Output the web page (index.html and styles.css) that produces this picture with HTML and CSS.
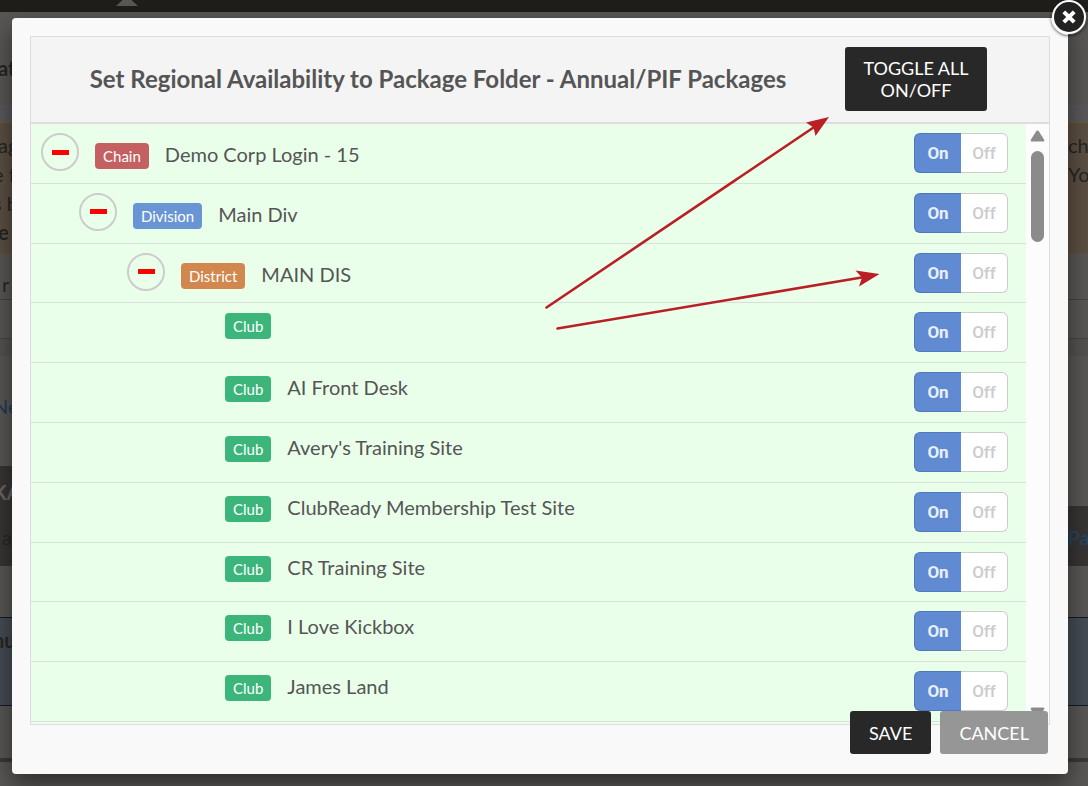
FILE: index.html
```html
<!DOCTYPE html>
<html lang="en">

<head>
    <meta charset="UTF-8">
    <meta name="viewport" content="width=device-width, initial-scale=1.0">
    <title>Regional Availability</title>
    <link rel="stylesheet" href="styles.css">
</head>

<body>
    <!-- dimmed page behind the dialog -->
    <div class="page" aria-hidden="true">
        <div class="topbar"><span class="caret"></span></div>
        <div class="band heading"><b class="bleed">at</b></div>
        <div class="band spacer"></div>
        <div class="band notice">
            <p><span class="bleed">ag</span><span class="side">ch</span></p>
            <p><span class="bleed-more">e f</span><span class="side">You</span></p>
            <p><span class="bleed-more">s b</span></p>
            <p><b class="bleed">e</b></p>
        </div>
        <div class="band filter">r</div>
        <div class="band divider"></div>
        <div class="band gap"></div>
        <div class="band links"><span class="link bleed-more">Ne</span></div>
        <div class="band tabs">
            <p class="tab-title"><b class="bleed-more">KA</b><span class="tab-side"></span></p>
            <p class="tab-row"><span>a</span><span class="side link">Pa</span></p>
        </div>
        <div class="band plain"></div>
        <div class="band folder"><b class="bleed-more">nu</b></div>
        <div class="band rest"></div>
        <div class="band foot"></div>
    </div>

    <div class="modal" role="dialog" aria-labelledby="title">
        <button class="close" type="button" aria-label="Close">
            <svg viewBox="0 0 36 36" width="36" height="36">
                <circle cx="18" cy="18" r="16" fill="#222" stroke="#fff" stroke-width="2" />
                <path d="M12.800 12.800l10.400 10.400M23.200 12.800l-10.400 10.400" stroke="#fff" stroke-width="4" />
            </svg>
        </button>

        <div class="panel">
            <div class="panel-head">
                <h1 id="title">Set Regional Availability to Package Folder - Annual/PIF Packages</h1>
                <div class="head-action">
                    <button class="btn btn-toggle" type="button">TOGGLE ALL<br>ON/OFF</button>
                </div>
            </div>

            <div class="panel-body">
                <div class="rows">
                    <div class="row parent">
                        <button class="collapse" type="button" aria-label="Collapse"></button>
                        <div class="node"><span class="tag chain">Chain</span><span class="name">Demo Corp Login - 15</span></div>
                        <label class="switch"><input type="checkbox" checked aria-label="Demo Corp Login - 15"><span class="on">On</span><span class="off">Off</span></label>
                    </div>
                    <div class="row parent level-1">
                        <button class="collapse" type="button" aria-label="Collapse"></button>
                        <div class="node"><span class="tag division">Division</span><span class="name">Main Div</span></div>
                        <label class="switch"><input type="checkbox" checked aria-label="Main Div"><span class="on">On</span><span class="off">Off</span></label>
                    </div>
                    <div class="row parent level-2">
                        <button class="collapse" type="button" aria-label="Collapse"></button>
                        <div class="node"><span class="tag district">District</span><span class="name">MAIN DIS</span></div>
                        <label class="switch"><input type="checkbox" checked aria-label="MAIN DIS"><span class="on">On</span><span class="off">Off</span></label>
                    </div>
                    <div class="row level-3">
                        <div class="node"><span class="tag club">Club</span></div>
                        <label class="switch"><input type="checkbox" checked aria-label="Club"><span class="on">On</span><span class="off">Off</span></label>
                    </div>
                    <div class="row level-3">
                        <div class="node"><span class="tag club">Club</span><span class="name">AI Front Desk</span></div>
                        <label class="switch"><input type="checkbox" checked aria-label="AI Front Desk"><span class="on">On</span><span class="off">Off</span></label>
                    </div>
                    <div class="row level-3">
                        <div class="node"><span class="tag club">Club</span><span class="name">Avery's Training Site</span></div>
                        <label class="switch"><input type="checkbox" checked aria-label="Avery's Training Site"><span class="on">On</span><span class="off">Off</span></label>
                    </div>
                    <div class="row level-3">
                        <div class="node"><span class="tag club">Club</span><span class="name">ClubReady Membership Test Site</span></div>
                        <label class="switch"><input type="checkbox" checked aria-label="ClubReady Membership Test Site"><span class="on">On</span><span class="off">Off</span></label>
                    </div>
                    <div class="row level-3">
                        <div class="node"><span class="tag club">Club</span><span class="name">CR Training Site</span></div>
                        <label class="switch"><input type="checkbox" checked aria-label="CR Training Site"><span class="on">On</span><span class="off">Off</span></label>
                    </div>
                    <div class="row level-3">
                        <div class="node"><span class="tag club">Club</span><span class="name">I Love Kickbox</span></div>
                        <label class="switch"><input type="checkbox" checked aria-label="I Love Kickbox"><span class="on">On</span><span class="off">Off</span></label>
                    </div>
                    <div class="row level-3">
                        <div class="node"><span class="tag club">Club</span><span class="name">James Land</span></div>
                        <label class="switch"><input type="checkbox" checked aria-label="James Land"><span class="on">On</span><span class="off">Off</span></label>
                    </div>
                </div>
                <div class="scrollbar">
                    <svg viewBox="0 0 15 12" width="15" height="12"><path d="M7.500 .5q.9 0 1.500 .9l5 8q1 1.900-1 2.100H2q-2-.2-1-2.100l5-8q.6-.9 1.500-.9z" fill="#8b8b8b" /></svg>
                    <span class="thumb"></span>
                    <svg class="down" viewBox="0 0 15 12" width="15" height="12"><path d="M7.500 11.500q.9 0 1.500-.9l5-8q1-1.900-1-2.100H2q-2 .2-1 2.100l5 8q.6 .9 1.500 .9z" fill="#8b8b8b" /></svg>
                </div>
            </div>
        </div>

        <div class="actions">
            <button class="btn" type="button">SAVE</button>
            <button class="btn btn-cancel" type="button">CANCEL</button>
        </div>

        <svg class="arrows" viewBox="540 110 345 225" width="345" height="225">
            <g stroke="#b91f25" stroke-width="2.600" stroke-linecap="round">
                <path d="M546.500 307.500L815 126.500" />
                <path d="M557.500 328.500L866 276.800" />
            </g>
            <g fill="#b91f25">
                <path d="M829 117L806 122.500L813.500 127.500L815.500 136z" />
                <path d="M879.500 274L855.500 270.500L862 277.500L859 286.500z" />
            </g>
        </svg>
    </div>
</body>

</html>
```
FILE: styles.css
```css
* {
    box-sizing: border-box;
}

body,
h1,
p {
    margin: 0;
}

body {
    font-family: Lato, sans-serif;
    font-size: 20px;
    color: #555;
}

button {
    font-family: inherit;
    cursor: pointer;
}

/* page behind */
.page {
    height: 100vh;
    overflow: hidden;
    background: #595755;
    color: #262525;
    line-height: 29px;
}

.page p {
    display: flex;
    justify-content: space-between;
}

.side,
.tab-side {
    width: 20px;
    white-space: nowrap;
}

/* text running in from the left edge */
.bleed {
    margin-left: -2px;
}

.bleed-more {
    margin-left: -7px;
}

.topbar {
    height: 12px;
    padding-left: 116px;
    background: #1f1e1b;
}

.caret {
    display: block;
    width: 22px;
    height: 6px;
    background: #5a5856;
    clip-path: polygon(30% 0, 70% 0, 100% 100%, 0 100%);
}

.heading {
    height: 93px;
    padding-top: 42px;
}

.spacer {
    height: 17px;
    background: #5a585a;
}

.notice {
    height: 132px;
    padding-top: 8px;
    border-top: 1px solid #6b5c34;
    border-bottom: 1px solid #5f5238;
    background: #5b4f42;
}

.filter {
    height: 46px;
    padding: 16px 0 0 2px;
    border-bottom: 1px solid #474543;
}

.divider {
    height: 39px;
    border-bottom: 1px solid #474543;
}

.gap {
    height: 17px;
    background: #545250;
}

.links {
    height: 110px;
    padding-top: 36px;
}

.link {
    color: #1f3c55;
}

.tabs {
    height: 100px;
    background: #373534;
}

.tab-title {
    height: 40px;
    padding-top: 12px;
    color: #686664;
}

.tab-side {
    height: 40px;
    margin-top: -12px;
    background: #595755;
}

.tab-row {
    padding-top: 17px;
    padding-left: 2px;
}

.tab-row .link {
    color: #24486a;
}

.plain {
    height: 51px;
}

.folder {
    height: 89px;
    padding-top: 8px;
    border-top: 1px solid #111a26;
    border-bottom: 1px solid #111a26;
    background: #454c53;
}

.rest {
    height: 52px;
}

.foot {
    height: 28px;
    border-top: 4px solid #3b3937;
}

/* dialog */
.modal {
    position: fixed;
    top: 18px;
    right: 20px;
    bottom: 12px;
    left: 12px;
    display: flex;
    flex-direction: column;
    padding: 18px 18px 20px;
    border-radius: 4px;
    background: #f9f9f9;
    box-shadow: 0 10px 25px rgba(0, 0, 0, 0.5);
}

.close {
    position: absolute;
    top: -19px;
    right: -19px;
    width: 36px;
    height: 36px;
    padding: 0;
    border: 0;
    border-radius: 50%;
    background: none;
    box-shadow: 0 1px 3px rgba(0, 0, 0, 0.6);
}

.close svg {
    display: block;
}

.panel {
    flex: 1;
    min-height: 0;
    display: flex;
    flex-direction: column;
    border: 1px solid #ddd;
}

.panel-head {
    display: flex;
    align-items: center;
    height: 87px;
    padding-bottom: 2px;
    border-bottom: 2px solid #ddd;
    background: #f4f4f4;
}

.panel-head h1 {
    flex: 1;
    text-align: center;
    font-size: 24px;
    line-height: 30px;
}

.head-action {
    width: 204px;
}

.btn {
    padding: 10px 19px;
    border: 0;
    border-radius: 3px;
    background: #282828;
    color: #fff;
    font-size: 18px;
    line-height: 22px;
}

.btn-toggle {
    width: 142px;
    padding: 10px 18px;
}

.btn-cancel {
    background: #969696;
}

.panel-body {
    flex: 1;
    min-height: 0;
    display: flex;
}

.rows {
    flex: 1;
    display: flex;
    flex-direction: column;
    padding-bottom: 2px;
    background: #eaffea;
}

.row {
    flex: 1;
    display: flex;
    align-items: flex-start;
    padding: 9px 18px 0 10px;
    border-bottom: 1px solid #d9dfd9;
}

.level-1 {
    padding-left: 48px;
}

.level-2 {
    padding-left: 96px;
}

.level-3 {
    padding-left: 194px;
}

.collapse {
    width: 38px;
    height: 38px;
    margin-right: 16px;
    padding: 0;
    border: 2px solid #ccc;
    border-radius: 50%;
    background: linear-gradient(#f00, #f00) center / 17px 5px no-repeat;
}

.node {
    flex: 1;
    display: flex;
    align-items: baseline;
    gap: 16px;
    padding-top: 1px;
}

.parent .node {
    padding-top: 7px;
}

.tag {
    padding: 0 8px;
    border-radius: 4px;
    color: #fff;
    font-size: 15px;
    line-height: 26px;
}

.chain {
    background: #c46062;
}

.division {
    background: #6a95d5;
}

.district {
    background: #d2874f;
}

.club {
    background: #3bb57a;
}

.name {
    line-height: 28px;
}

/* on/off switch */
.switch {
    display: flex;
    width: 94px;
    height: 40px;
    cursor: pointer;
    font-family: Roboto, sans-serif;
    font-size: 17px;
    font-weight: 500;
    line-height: 38px;
    text-align: center;
}

.switch input {
    appearance: none;
    width: 0;
    height: 0;
    margin: 0;
}

.on,
.off {
    flex: 1;
    border: 1px solid #ccc;
}

.on {
    border-color: #5079bd;
    border-right: 0;
    border-radius: 6px 0 0 6px;
    background: #608bd2;
    color: #e8effa;
    font-weight: 700;
}

.off {
    border-left: 0;
    border-radius: 0 6px 6px 0;
    background: #fff;
    color: #ccc;
}

.scrollbar {
    display: flex;
    flex-direction: column;
    align-items: center;
    width: 23px;
    padding-top: 6px;
    background: #fcfcfc;
}

.thumb {
    width: 13px;
    height: 91px;
    margin-top: 9px;
    border-radius: 7px;
    background: #8b8b8b;
}

.down {
    margin-top: auto;
    margin-bottom: 5px;
}

.actions {
    position: relative;
    display: flex;
    justify-content: flex-end;
    gap: 9px;
    margin: -14px 2px 0 0;
}

.actions .btn {
    height: 43px;
}

/* pointers drawn over the list */
.arrows {
    position: absolute;
    top: 92px;
    left: 528px;
    pointer-events: none;
}
```
